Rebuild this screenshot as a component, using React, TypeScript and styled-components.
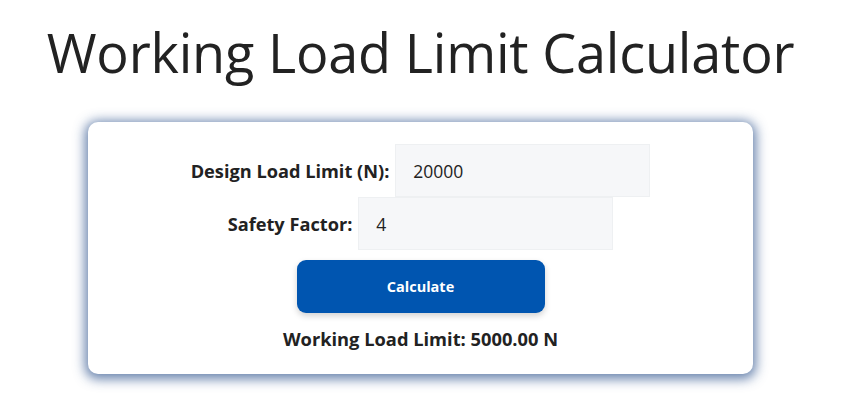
import React, { useState } from "react";
import styled, { createGlobalStyle } from "styled-components";

const GlobalStyle = createGlobalStyle`
  html, body {
    margin: 0;
    padding: 0;
    background: #ffffff;
    font-family: "Open Sans", "Noto Sans", sans-serif;
    color: #222222;
  }
`;

const App = () => {
  const [load, setLoad] = useState("20000");
  const [factor, setFactor] = useState("4");
  const [result, setResult] = useState(5000);

  const handleCalculate = () => {
    const l = parseFloat(load);
    const f = parseFloat(factor);
    if (!isNaN(l) && !isNaN(f) && f !== 0) setResult(l / f);
  };

  return (
    <>
      <GlobalStyle />
      <S.Page>
        <S.Title>Working Load Limit Calculator</S.Title>
        <S.Card>
          <S.Row>
            <S.Label htmlFor="load">Design Load Limit (N):</S.Label>
            <S.Input id="load" value={load} onChange={(e) => setLoad(e.target.value)} />
          </S.Row>
          <S.Row>
            <S.Label htmlFor="factor">Safety Factor:</S.Label>
            <S.Input id="factor" value={factor} onChange={(e) => setFactor(e.target.value)} />
          </S.Row>
          <S.Button type="button" onClick={handleCalculate}>
            Calculate
          </S.Button>
          <S.Result>Working Load Limit: {result.toFixed(2)} N</S.Result>
        </S.Card>
      </S.Page>
    </>
  );
};

const S = {
  Page: styled.div`
    display: flex;
    flex-direction: column;
    align-items: center;
    min-height: 100vh;
    box-sizing: border-box;
    padding: 13px 10px 30px 0;
  `,
  Title: styled.h1`
    margin: 0;
    font-family: "Open Sans", sans-serif;
    font-weight: 400;
    font-size: 54px;
    line-height: 78px;
    letter-spacing: -0.2px;
    color: #222222;
  `,
  Card: styled.div`
    margin-top: 31px;
    width: 665px;
    height: 252px;
    flex-shrink: 0;
    box-sizing: border-box;
    background: #ffffff;
    border-radius: 10px;
    box-shadow: 0 2px 12px 3px rgba(45, 82, 140, 0.72);
    display: flex;
    flex-direction: column;
    align-items: center;
    padding-top: 22px;
  `,
  Row: styled.div`
    display: flex;
    align-items: center;
    gap: 6px;
  `,
  Label: styled.label`
    font-weight: 700;
    font-size: 18.2px;
    color: #222222;
  `,
  Input: styled.input`
    width: 255px;
    height: 53px;
    box-sizing: border-box;
    border: 1px solid #eef0f2;
    background: #f6f7f9;
    padding: 0 17px;
    font-family: "Open Sans", sans-serif;
    font-size: 17.5px;
    color: #222222;
    outline: none;
  `,
  Button: styled.button`
    margin-top: 10px;
    width: 248px;
    height: 53px;
    border: none;
    border-radius: 9px;
    background: #0055b0;
    color: #ffffff;
    font-family: "Open Sans", sans-serif;
    font-weight: 700;
    font-size: 14.5px;
    box-shadow: 0 3px 6px rgba(0, 0, 0, 0.18);
    cursor: pointer;
  `,
  Result: styled.p`
    margin: 13px 0 0;
    font-weight: 700;
    font-size: 18.3px;
    color: #222222;
  `,
};

export default App;
